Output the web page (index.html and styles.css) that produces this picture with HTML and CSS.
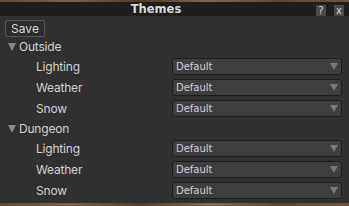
FILE: index.html
```html
<!DOCTYPE html>
<html>
<head>
<meta charset="utf-8">
<link rel="stylesheet" href="styles.css">
</head>
<body>
<div class="window">
  <div class="titlebar">
    <span class="title">Themes</span>
    <div class="tbuttons">
      <span class="tbtn">?</span>
      <span class="tbtn">x</span>
    </div>
  </div>
  <div class="content">
    <button class="save">Save</button>
    <div class="section">
      <div class="header"><span class="tri"></span>Outside</div>
      <div class="row"><span class="label">Lighting</span><div class="select">Default<span class="arrow"></span></div></div>
      <div class="row"><span class="label">Weather</span><div class="select">Default<span class="arrow"></span></div></div>
      <div class="row"><span class="label">Snow</span><div class="select">Default<span class="arrow"></span></div></div>
    </div>
    <div class="section">
      <div class="header"><span class="tri"></span>Dungeon</div>
      <div class="row"><span class="label">Lighting</span><div class="select">Default<span class="arrow"></span></div></div>
      <div class="row"><span class="label">Weather</span><div class="select">Default<span class="arrow"></span></div></div>
      <div class="row"><span class="label">Snow</span><div class="select">Default<span class="arrow"></span></div></div>
    </div>
  </div>
</div>
</body>
</html>
```
FILE: styles.css
```css
html, body {
  margin: 0;
  padding: 0;
}
body {
  width: 349px;
  height: 206px;
  overflow: hidden;
  background: linear-gradient(90deg, #5e4a33, #7a6247 20%, #4f3c29 40%, #806850 60%, #5a4630 80%, #6e573c);
  padding-top: 2px;
  box-sizing: border-box;
  font-family: Inter, "Noto Sans", sans-serif;
}
.window {
  height: 201px;
  background: #303030;
  display: flex;
  flex-direction: column;
}
.titlebar {
  height: 14px;
  background: #1e1e1e;
  display: flex;
  align-items: center;
  padding-right: 5px;
}
.title {
  flex: 1;
  text-align: center;
  color: #d8d8d8;
  font-weight: bold;
  font-size: 11.5px;
  line-height: 14px;
  font-family: "DejaVu Sans", sans-serif;
  padding-right: 4px;
}
.tbuttons {
  display: flex;
  gap: 8px;
  margin-top: 2px;
}
.tbtn {
  width: 10px;
  height: 11px;
  background: #4a4a4a;
  color: #d8d8d8;
  font-size: 10px;
  line-height: 11px;
  text-align: center;
  font-family: "DejaVu Sans", sans-serif;
}
.content {
  padding: 4px 7px 0 5px;
}
.save {
  display: block;
  width: 40px;
  height: 17px;
  padding: 0;
  border: 1px solid #555;
  border-radius: 2px;
  background: #2c2c2c;
  color: #d8d8d8;
  font-family: Inter, "Noto Sans", sans-serif;
  font-size: 12px;
  line-height: 15px;
}
.header {
  height: 19px;
  display: flex;
  align-items: center;
  color: #d0d0d0;
  font-size: 12px;
  letter-spacing: -0.2px;
}
.tri {
  width: 0;
  height: 0;
  border-left: 4.5px solid transparent;
  border-right: 4.5px solid transparent;
  border-top: 8px solid #888;
  margin-left: 3px;
  margin-right: 3px;
}
.row {
  height: 21px;
  display: flex;
  align-items: flex-start;
}
.label {
  width: 136px;
  padding-left: 31px;
  color: #d0d0d0;
  font-size: 12px;
  letter-spacing: -0.2px;
  line-height: 21px;
}
.select {
  margin-top: 2px;
  flex: 1;
  height: 15px;
  border: 1px solid #1c1c1c;
  border-radius: 3px;
  background: #3e3e3e;
  color: #d0d0d0;
  font-family: "DejaVu Sans", sans-serif;
  font-size: 10px;
  line-height: 15px;
  padding-left: 3px;
  position: relative;
}
.arrow {
  position: absolute;
  right: 3px;
  top: 4px;
  width: 0;
  height: 0;
  border-left: 4px solid transparent;
  border-right: 4px solid transparent;
  border-top: 7px solid #7a7a7a;
}
```
